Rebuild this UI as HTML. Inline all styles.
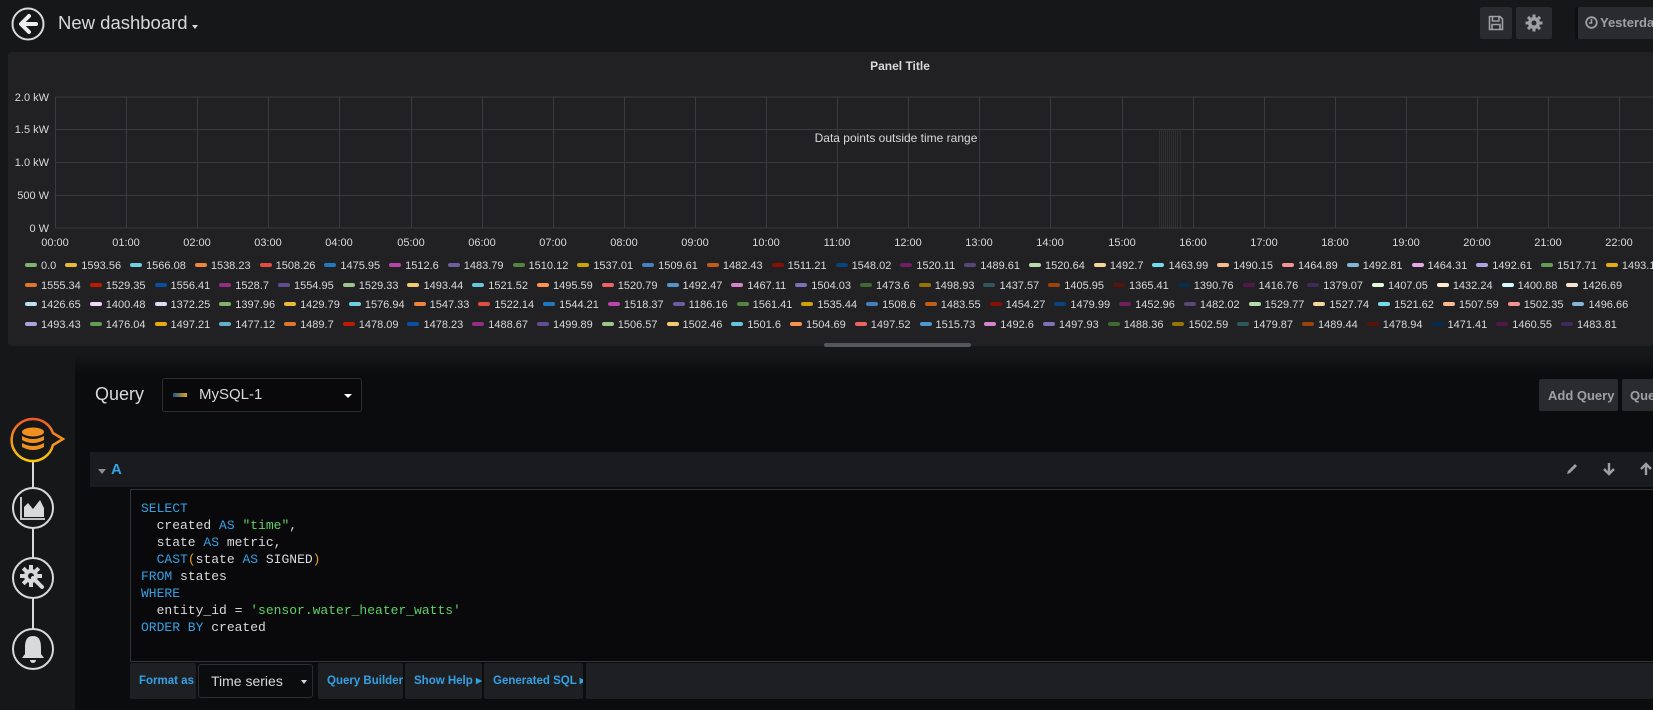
<!DOCTYPE html>
<html><head><meta charset="utf-8"><style>
*{box-sizing:border-box;margin:0;padding:0}
body{width:1653px;height:710px;overflow:hidden;background:#161719;font-family:"Liberation Sans",sans-serif;color:#d8d9da;position:relative}
.a{position:absolute;white-space:nowrap}
.btn{position:absolute;background:#2a2b2e;border-radius:2px}
.grid line{stroke:#3a3b3e;stroke-width:1}
.lg{position:absolute;left:25px;white-space:nowrap;font-size:11px;color:#d8d9da;overflow:hidden;width:1628px;height:14px;line-height:14px}
.lg span{display:inline-block;margin-right:9px}
.lg i{display:inline-block;width:12px;height:4px;border-radius:2px;vertical-align:middle;margin-right:4px;margin-top:-2px}
.code{font-family:"Liberation Mono","DejaVu Sans Mono",monospace;font-size:13px;line-height:17px;color:#d8d9da;white-space:pre}
.k{color:#33a2e5}.s{color:#5fd067}.p{color:#e8a020}
.tb{position:absolute;top:663px;height:36px;background:#1e1f22;color:#33a2e5;font-size:11.5px;font-weight:bold;line-height:36px;padding-left:9px;border-radius:2px;white-space:nowrap;overflow:hidden}
</style></head><body>

<svg class="a" style="left:10px;top:7px" width="36" height="36" viewBox="0 0 36 36"><circle cx="18" cy="17" r="15.5" fill="none" stroke="#d8d9da" stroke-width="2"/><path d="M19 9 L11 17 L19 25 M11.5 17 H26" fill="none" stroke="#eee" stroke-width="4" stroke-linecap="round" stroke-linejoin="round"/></svg>
<div class="a" style="left:58px;top:12px;font-size:18.5px;color:#d8d9da">New dashboard</div>
<div class="a" style="left:192px;top:25px;border-left:3.5px solid transparent;border-right:3.5px solid transparent;border-top:4px solid #d8d9da"></div>
<div class="btn" style="left:1480px;top:7px;width:32px;height:32px"></div>
<svg class="a" style="left:1488px;top:15px" width="16" height="16" viewBox="0 0 16 16"><path d="M1.5 1.5H12L14.5 4V14.5H1.5Z M4.5 1.5V6H11V1.5 M4 14.5V9.5H12V14.5" fill="none" stroke="#9fa0a3" stroke-width="1.6"/></svg>
<div class="btn" style="left:1516px;top:7px;width:36px;height:32px"></div>
<svg class="a" style="left:1525px;top:14px" width="18" height="18" viewBox="0 0 18 18"><g fill="#9fa0a3"><circle cx="9" cy="9" r="6"/><rect x="7.5" y="0.5" width="3" height="17"/><rect x="0.5" y="7.5" width="17" height="3"/><rect x="7.5" y="0.5" width="3" height="17" transform="rotate(45 9 9)"/><rect x="7.5" y="0.5" width="3" height="17" transform="rotate(-45 9 9)"/></g><circle cx="9" cy="9" r="2.5" fill="#2a2b2e"/></svg>
<div class="a" style="left:1575px;top:7px;width:3px;height:32px;background:#0e0f11"></div>
<div class="btn" style="left:1578px;top:7px;width:80px;height:32px"></div>
<svg class="a" style="left:1585px;top:16px" width="13" height="13" viewBox="0 0 13 13"><circle cx="6.5" cy="6.5" r="5.3" fill="none" stroke="#9fa0a3" stroke-width="1.8"/><path d="M6.5 3V7H4" fill="none" stroke="#9fa0a3" stroke-width="1.6"/></svg>
<div class="a" style="left:1600px;top:15px;font-size:13px;font-weight:bold;color:#9fa0a3">Yesterday</div>

<div class="a" style="left:8px;top:52px;width:1645px;height:294px;background:#212124;border-radius:3px"></div>
<div class="a" style="left:0;top:59px;width:1800px;text-align:center;font-size:12px;font-weight:bold;color:#d8d9da">Panel Title</div>
<svg class="a grid" style="left:0;top:0" width="1653" height="260">
<g>
<line x1="55" y1="97" x2="1653" y2="97"/><line x1="55" y1="129.5" x2="1653" y2="129.5"/><line x1="55" y1="162.5" x2="1653" y2="162.5"/><line x1="55" y1="195.5" x2="1653" y2="195.5"/><line x1="55" y1="228" x2="1653" y2="228"/>
<line x1="55.5" y1="97" x2="55.5" y2="228"/><line x1="126.5" y1="97" x2="126.5" y2="228"/><line x1="197.5" y1="97" x2="197.5" y2="228"/><line x1="268.5" y1="97" x2="268.5" y2="228"/><line x1="339.5" y1="97" x2="339.5" y2="228"/><line x1="411.5" y1="97" x2="411.5" y2="228"/><line x1="482.5" y1="97" x2="482.5" y2="228"/><line x1="553.5" y1="97" x2="553.5" y2="228"/><line x1="624.5" y1="97" x2="624.5" y2="228"/><line x1="695.5" y1="97" x2="695.5" y2="228"/><line x1="766.5" y1="97" x2="766.5" y2="228"/><line x1="837.5" y1="97" x2="837.5" y2="228"/><line x1="908.5" y1="97" x2="908.5" y2="228"/><line x1="979.5" y1="97" x2="979.5" y2="228"/><line x1="1050.5" y1="97" x2="1050.5" y2="228"/><line x1="1122.5" y1="97" x2="1122.5" y2="228"/><line x1="1193.5" y1="97" x2="1193.5" y2="228"/><line x1="1264.5" y1="97" x2="1264.5" y2="228"/><line x1="1335.5" y1="97" x2="1335.5" y2="228"/><line x1="1406.5" y1="97" x2="1406.5" y2="228"/><line x1="1477.5" y1="97" x2="1477.5" y2="228"/><line x1="1548.5" y1="97" x2="1548.5" y2="228"/><line x1="1619.5" y1="97" x2="1619.5" y2="228"/>
</g>
<g stroke-width="1" opacity="0.6">
<line x1="1159.5" y1="130" x2="1159.5" y2="228" stroke="#7EB26D"/><line x1="1161.5" y1="130" x2="1161.5" y2="228" stroke="#EAB839"/><line x1="1163.5" y1="130" x2="1163.5" y2="228" stroke="#6ED0E0"/><line x1="1165.5" y1="130" x2="1165.5" y2="228" stroke="#EF843C"/><line x1="1167.5" y1="130" x2="1167.5" y2="228" stroke="#E24D42"/><line x1="1169.5" y1="130" x2="1169.5" y2="228" stroke="#1F78C1"/><line x1="1171.5" y1="130" x2="1171.5" y2="228" stroke="#BA43A9"/><line x1="1173.5" y1="130" x2="1173.5" y2="228" stroke="#CCA300"/><line x1="1175.5" y1="130" x2="1175.5" y2="228" stroke="#890F02"/><line x1="1177.5" y1="130" x2="1177.5" y2="228" stroke="#705DA0"/><line x1="1180.5" y1="130" x2="1180.5" y2="228" stroke="#508642"/>
</g>
<g font-family="Liberation Sans" font-size="11" fill="#d8d9da" text-anchor="end">
<text x="49" y="101">2.0 kW</text><text x="49" y="133">1.5 kW</text><text x="49" y="166">1.0 kW</text><text x="49" y="199">500 W</text><text x="49" y="232">0 W</text>
</g>
<g font-family="Liberation Sans" font-size="11" fill="#d8d9da" text-anchor="middle">
<text x="55" y="246">00:00</text><text x="126" y="246">01:00</text><text x="197" y="246">02:00</text><text x="268" y="246">03:00</text><text x="339" y="246">04:00</text><text x="411" y="246">05:00</text><text x="482" y="246">06:00</text><text x="553" y="246">07:00</text><text x="624" y="246">08:00</text><text x="695" y="246">09:00</text><text x="766" y="246">10:00</text><text x="837" y="246">11:00</text><text x="908" y="246">12:00</text><text x="979" y="246">13:00</text><text x="1050" y="246">14:00</text><text x="1122" y="246">15:00</text><text x="1193" y="246">16:00</text><text x="1264" y="246">17:00</text><text x="1335" y="246">18:00</text><text x="1406" y="246">19:00</text><text x="1477" y="246">20:00</text><text x="1548" y="246">21:00</text><text x="1619" y="246">22:00</text>
</g>
<text x="896" y="142" font-family="Liberation Sans" font-size="12" fill="#d8d9da" text-anchor="middle">Data points outside time range</text>
</svg>

<div class="lg" style="top:259px"><span><i style="background:#7EB26D"></i>0.0</span><span><i style="background:#EAB839"></i>1593.56</span><span><i style="background:#6ED0E0"></i>1566.08</span><span><i style="background:#EF843C"></i>1538.23</span><span><i style="background:#E24D42"></i>1508.26</span><span><i style="background:#1F78C1"></i>1475.95</span><span><i style="background:#BA43A9"></i>1512.6</span><span><i style="background:#705DA0"></i>1483.79</span><span><i style="background:#508642"></i>1510.12</span><span><i style="background:#CCA300"></i>1537.01</span><span><i style="background:#447EBC"></i>1509.61</span><span><i style="background:#C15C17"></i>1482.43</span><span><i style="background:#890F02"></i>1511.21</span><span><i style="background:#0A437C"></i>1548.02</span><span><i style="background:#6D1F62"></i>1520.11</span><span><i style="background:#584477"></i>1489.61</span><span><i style="background:#B7DBAB"></i>1520.64</span><span><i style="background:#F4D598"></i>1492.7</span><span><i style="background:#70DBED"></i>1463.99</span><span><i style="background:#F9BA8F"></i>1490.15</span><span><i style="background:#F29191"></i>1464.89</span><span><i style="background:#82B5D8"></i>1492.81</span><span><i style="background:#E5A8E2"></i>1464.31</span><span><i style="background:#AEA2E0"></i>1492.61</span><span><i style="background:#629E51"></i>1517.71</span><span><i style="background:#E5AC0E"></i>1493.1</span></div>
<div class="lg" style="top:279px"><span><i style="background:#E0752D"></i>1555.34</span><span><i style="background:#BF1B00"></i>1529.35</span><span><i style="background:#0A50A1"></i>1556.41</span><span><i style="background:#962D82"></i>1528.7</span><span><i style="background:#614D93"></i>1554.95</span><span><i style="background:#9AC48A"></i>1529.33</span><span><i style="background:#F2C96D"></i>1493.44</span><span><i style="background:#65C5DB"></i>1521.52</span><span><i style="background:#F9934E"></i>1495.59</span><span><i style="background:#EA6460"></i>1520.79</span><span><i style="background:#5195CE"></i>1492.47</span><span><i style="background:#D683CE"></i>1467.11</span><span><i style="background:#806EB7"></i>1504.03</span><span><i style="background:#3F6833"></i>1473.6</span><span><i style="background:#967302"></i>1498.93</span><span><i style="background:#2F575E"></i>1437.57</span><span><i style="background:#99440A"></i>1405.95</span><span><i style="background:#58140C"></i>1365.41</span><span><i style="background:#052B51"></i>1390.76</span><span><i style="background:#511749"></i>1416.76</span><span><i style="background:#3F2B5B"></i>1379.07</span><span><i style="background:#E0F9D7"></i>1407.05</span><span><i style="background:#FCEACA"></i>1432.24</span><span><i style="background:#CFFAFF"></i>1400.88</span><span><i style="background:#F9E2D2"></i>1426.69</span></div>
<div class="lg" style="top:298px"><span><i style="background:#BADFF4"></i>1426.65</span><span><i style="background:#F9D9F9"></i>1400.48</span><span><i style="background:#DEDAF7"></i>1372.25</span><span><i style="background:#7EB26D"></i>1397.96</span><span><i style="background:#EAB839"></i>1429.79</span><span><i style="background:#6ED0E0"></i>1576.94</span><span><i style="background:#EF843C"></i>1547.33</span><span><i style="background:#E24D42"></i>1522.14</span><span><i style="background:#1F78C1"></i>1544.21</span><span><i style="background:#BA43A9"></i>1518.37</span><span><i style="background:#705DA0"></i>1186.16</span><span><i style="background:#508642"></i>1561.41</span><span><i style="background:#CCA300"></i>1535.44</span><span><i style="background:#447EBC"></i>1508.6</span><span><i style="background:#C15C17"></i>1483.55</span><span><i style="background:#890F02"></i>1454.27</span><span><i style="background:#0A437C"></i>1479.99</span><span><i style="background:#6D1F62"></i>1452.96</span><span><i style="background:#584477"></i>1482.02</span><span><i style="background:#B7DBAB"></i>1529.77</span><span><i style="background:#F4D598"></i>1527.74</span><span><i style="background:#70DBED"></i>1521.62</span><span><i style="background:#F9BA8F"></i>1507.59</span><span><i style="background:#F29191"></i>1502.35</span><span><i style="background:#82B5D8"></i>1496.66</span></div>
<div class="lg" style="top:318px"><span><i style="background:#AEA2E0"></i>1493.43</span><span><i style="background:#629E51"></i>1476.04</span><span><i style="background:#E5AC0E"></i>1497.21</span><span><i style="background:#64B0C8"></i>1477.12</span><span><i style="background:#E0752D"></i>1489.7</span><span><i style="background:#BF1B00"></i>1478.09</span><span><i style="background:#0A50A1"></i>1478.23</span><span><i style="background:#962D82"></i>1488.67</span><span><i style="background:#614D93"></i>1499.89</span><span><i style="background:#9AC48A"></i>1506.57</span><span><i style="background:#F2C96D"></i>1502.46</span><span><i style="background:#65C5DB"></i>1501.6</span><span><i style="background:#F9934E"></i>1504.69</span><span><i style="background:#EA6460"></i>1497.52</span><span><i style="background:#5195CE"></i>1515.73</span><span><i style="background:#D683CE"></i>1492.6</span><span><i style="background:#806EB7"></i>1497.93</span><span><i style="background:#3F6833"></i>1488.36</span><span><i style="background:#967302"></i>1502.59</span><span><i style="background:#2F575E"></i>1479.87</span><span><i style="background:#99440A"></i>1489.44</span><span><i style="background:#58140C"></i>1478.94</span><span><i style="background:#052B51"></i>1471.41</span><span><i style="background:#511749"></i>1460.55</span><span><i style="background:#3F2B5B"></i>1483.81</span></div>
<div class="a" style="left:824px;top:343px;width:147px;height:4px;border-radius:2px;background:#55565a"></div>

<div class="a" style="left:75px;top:373px;width:1578px;height:337px;background:#0b0c0e"></div>
<div class="a" style="left:75px;top:355px;width:1578px;height:18px;background:linear-gradient(#161719,#0b0c0e)"></div>
<div class="a" style="left:95px;top:384px;font-size:18px;color:#d8d9da">Query</div>
<div class="a" style="left:162px;top:378px;width:200px;height:34px;border:1px solid #2c2d30;border-radius:3px;background:#09090b"></div>
<div class="a" style="left:173px;top:393px;width:14px;height:4px;background:linear-gradient(90deg,#1f5a8c,#e0a020)"></div>
<div class="a" style="left:199px;top:386px;font-size:15px;color:#d8d9da">MySQL-1</div>
<div class="a" style="left:344px;top:394px;border-left:4px solid transparent;border-right:4px solid transparent;border-top:4px solid #fff"></div>
<div class="btn" style="left:1539px;top:379px;width:79px;height:32px;background:#2a2b2e"></div>
<div class="a" style="left:1548px;top:388px;font-size:13px;font-weight:bold;color:#9fa0a3">Add Query</div>
<div class="btn" style="left:1622px;top:379px;width:40px;height:32px;background:#2a2b2e"></div>
<div class="a" style="left:1630px;top:388px;font-size:13px;font-weight:bold;color:#9fa0a3">Query</div>

<div class="a" style="left:90px;top:452px;width:1563px;height:35px;background:#1a1b1e"></div>
<div class="a" style="left:98px;top:469px;border-left:4px solid transparent;border-right:4px solid transparent;border-top:5px solid #8e8e90"></div>
<div class="a" style="left:111px;top:461px;font-size:15px;font-weight:bold;color:#33a2e5">A</div>
<svg class="a" style="left:1564px;top:461px" width="90" height="16" viewBox="0 0 90 16"><path d="M3 13 L4 10 L11 3 L13 5 L6 12 Z" fill="#9fa0a3"/><path d="M45 2 V12 M40 8 L45 13 L50 8" fill="none" stroke="#9fa0a3" stroke-width="2.4"/><path d="M82 14 V4 M77 8 L82 3 L87 8" fill="none" stroke="#9fa0a3" stroke-width="2.4"/></svg>

<div class="a" style="left:130px;top:489px;width:1530px;height:173px;border:1px solid #333437;background:#09090b"></div>
<div class="a code" style="left:141px;top:500px"><span class="k">SELECT</span>
  created <span class="k">AS</span> <span class="s">"time"</span>,
  state <span class="k">AS</span> metric,
  <span class="k">CAST</span><span class="p">(</span>state <span class="k">AS</span> SIGNED<span class="p">)</span>
<span class="k">FROM</span> states
<span class="k">WHERE</span>
  entity_id = <span class="s">'sensor.water_heater_watts'</span>
<span class="k">ORDER BY</span> created</div>

<div class="tb" style="left:130px;width:66px">Format as</div>
<div class="a" style="left:198px;top:664px;width:115px;height:34px;background:#0b0c0e;border:1px solid #2c2d30;border-radius:3px;color:#d8d9da;font-size:14px;line-height:32px;padding-left:12px">Time series</div>
<div class="a" style="left:301px;top:680px;border-left:3.5px solid transparent;border-right:3.5px solid transparent;border-top:4px solid #d8d9da"></div>
<div class="tb" style="left:318px;width:85px">Query Builder</div>
<div class="tb" style="left:405px;width:77px">Show Help &#9656;</div>
<div class="tb" style="left:484px;width:99px">Generated SQL &#9656;</div>
<div class="tb" style="left:586px;width:1067px"></div>

<div class="a" style="left:32px;top:455px;width:2px;height:175px;background:#d8d9da"></div>
<svg class="a" style="left:10px;top:417px" width="56" height="46" viewBox="0 0 56 46"><defs><linearGradient id="g" x1="0" y1="0" x2="0" y2="1"><stop offset="0" stop-color="#f05a28"/><stop offset="1" stop-color="#fbca0a"/></linearGradient></defs><path d="M23 2 A21 21 0 0 1 43 16 L53 22 L43 28 A21 21 0 1 1 23 2 Z" fill="#161719" stroke="url(#g)" stroke-width="2.5"/><g fill="#f0901e"><ellipse cx="23" cy="15" rx="11" ry="4.5"/><path d="M12 19 Q23 25 34 19 V23 Q23 29 12 23 Z"/><path d="M12 26 Q23 32 34 26 V30 Q23 36 12 30 Z"/></g></svg>
<svg class="a" style="left:11px;top:486px" width="44" height="44" viewBox="0 0 44 44"><circle cx="22" cy="22" r="20" fill="#161719" stroke="#d8d9da" stroke-width="2"/><path d="M10 11 V33 H34" fill="none" stroke="#d8d9da" stroke-width="1.8"/><path d="M13 31 V21 L17 17 L22 23 L29 14 L33 22 V31 Z" fill="#d8d9da"/></svg>
<svg class="a" style="left:11px;top:556px" width="44" height="44" viewBox="0 0 44 44"><circle cx="22" cy="22" r="20" fill="#161719" stroke="#d8d9da" stroke-width="2"/><g fill="#d8d9da"><circle cx="20" cy="20" r="7"/><rect x="18" y="9" width="4" height="22"/><rect x="9" y="18" width="22" height="4"/><rect x="18" y="9" width="4" height="22" transform="rotate(45 20 20)"/><rect x="18" y="9" width="4" height="22" transform="rotate(-45 20 20)"/></g><circle cx="20" cy="20" r="3" fill="#161719"/><path d="M22 22 L31 31" stroke="#d8d9da" stroke-width="4" stroke-linecap="round"/></svg>
<svg class="a" style="left:11px;top:627px" width="44" height="44" viewBox="0 0 44 44"><circle cx="22" cy="22" r="20" fill="#161719" stroke="#d8d9da" stroke-width="2"/><path d="M22 9 C15 9 14 15 14 21 V27 L11 31 H33 L30 27 V21 C30 15 29 9 22 9 Z" fill="#d8d9da"/><path d="M19 33 A3 3 0 0 0 25 33 Z" fill="#d8d9da"/></svg>
</body></html>
